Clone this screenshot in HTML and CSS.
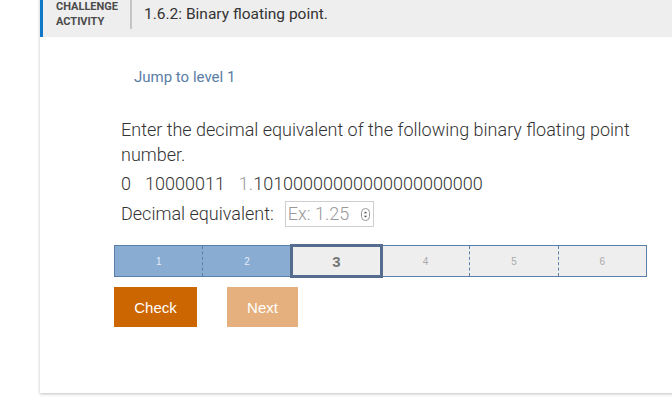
FILE: index.html
```html
<!DOCTYPE html>
<html>
<head>
<meta charset="utf-8">
<link rel="stylesheet" href="styles.css">
</head>
<body>
<div class="card">
  <div class="header">
    <div class="label">CHALLENGE<br>ACTIVITY</div>
    <div class="title">1.6.2: Binary floating point.</div>
  </div>
  <div class="content">
    <div class="jump">Jump to level 1</div>
    <div class="prompt">
      <p class="q">Enter the decimal equivalent of the following binary floating point number.</p>
      <p class="bits"><span>0</span><span>10000011</span><span><span class="lead">1.</span>10100000000000000000000</span></p>
      <div class="answer">
        <span>Decimal equivalent:</span>
        <span class="input"><span class="ph">Ex: 1.25</span>
          <svg class="spin" width="9" height="13" viewBox="0 0 9 13"><rect x="0.5" y="0.5" width="8" height="12" rx="4" fill="#fff" stroke="#999"/><path d="M2.7 5.2 L4.5 3.4 L6.3 5.2 Z" fill="#555"/><path d="M2.7 7.8 L4.5 9.6 L6.3 7.8 Z" fill="#555"/></svg>
        </span>
      </div>
    </div>
    <div class="levels">
      <div class="seg done">1</div>
      <div class="seg done">2</div>
      <div class="seg current">3</div>
      <div class="seg">4</div>
      <div class="seg">5</div>
      <div class="seg last">6</div>
    </div>
    <div class="buttons">
      <button class="btn check">Check</button>
      <button class="btn next">Next</button>
    </div>
  </div>
</div>
</body>
</html>
```

FILE: styles.css
```css
html, body {
  margin: 0;
  padding: 0;
  background: #fff;
  overflow: hidden;
  width: 672px;
  height: 405px;
}
body {
  font-family: Roboto, "Liberation Sans", sans-serif;
  color: #333;
}
.card {
  margin-left: 40px;
  margin-top: -10px;
  width: 700px;
  height: 403px;
  background: #fff;
  box-shadow: 0 1px 3px rgba(0,0,0,0.25);
}
.header {
  height: 47px;
  background: #eeeeee;
  border-left: 3px solid #0f78c8;
  display: flex;
  align-items: center;
}
.label {
  font-family: Roboto, "Liberation Sans", sans-serif;
  font-weight: 700;
  font-size: 11px;
  line-height: 15px;
  color: #4a4a4a;
  padding-left: 13px;
  padding-right: 12px;
  border-right: 2px solid #c4c4c4;
  height: 30px;
  box-sizing: border-box;
}
.title {
  font-size: 15.5px;
  color: #333;
  padding-left: 12px;
}
.content {
  padding-left: 74px;
}
.jump {
  margin-top: 31px;
  padding-left: 20px;
  font-size: 15px;
  line-height: 18px;
  color: #5a7da5;
}
.prompt {
  padding-left: 7px;
  width: 540px;
  margin-top: 31px;
  font-size: 18px;
  font-weight: 300;
  color: #333;
}
.q {
  margin: 0;
  line-height: 25px;
}
.bits {
  margin: 5px 0 0;
  line-height: 24px;
  display: flex;
  gap: 14px;
}
.bits .lead {
  color: #999;
}
.answer {
  margin-top: 5px;
  display: flex;
  align-items: center;
  gap: 11px;
  line-height: 24px;
}
.input {
  width: 89px;
  height: 26px;
  box-sizing: border-box;
  border: 1px solid #cfcfcf;
  display: flex;
  align-items: center;
  justify-content: space-between;
  padding: 0 3px 0 2px;
}
.ph {
  color: #999;
  font-size: 18px;
  font-weight: 300;
}
.levels {
  margin-top: 18px;
  width: 533px;
  height: 32px;
  box-sizing: border-box;
  border: 1px solid #5a7fa8;
  display: flex;
  background: #eeeeee;
}
.seg {
  flex: 1;
  display: flex;
  align-items: center;
  justify-content: center;
  font-family: "Liberation Sans", Arial, sans-serif;
  font-size: 10px;
  color: #aaa;
  border-right: 1px dashed #5a7fa8;
}
.seg.last {
  border-right: none;
}
.seg.done {
  background: #88acd2;
  color: #e6eef7;
}
.seg.current {
  position: relative;
  z-index: 1;
  margin: -2px -1px -2px -2px;
  border: 3px solid #566c8e;
  background: #eeeeee;
  font-weight: 700;
  font-size: 15px;
  color: #777;
}
.buttons {
  margin-top: 10px;
  display: flex;
  gap: 30px;
}
.btn {
  border: none;
  height: 40px;
  font-family: "Liberation Sans", Arial, sans-serif;
  font-size: 15px;
  color: #fff;
  padding: 0;
}
.check {
  width: 83px;
  background: #cc6600;
}
.next {
  width: 71px;
  background: #e5b07d;
}
```
